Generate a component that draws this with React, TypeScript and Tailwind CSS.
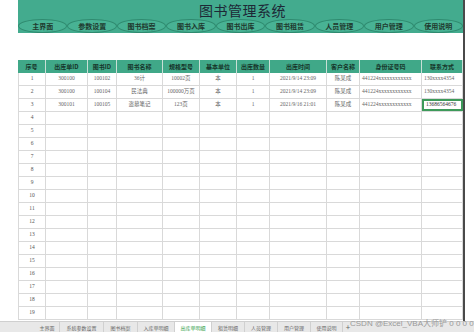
const navItems = ['主界面', '参数设置', '图书档案', '图书入库', '图书出库', '图书租赁', '人员管理', '用户管理', '使用说明'];

const headers = ['序号', '出库单ID', '图书ID', '图书名称', '规格型号', '基本单位', '出库数量', '出库时间', '客户名称', '身份证号码', '联系方式'];

const colW = ['w-[28px]', 'w-[42px]', 'w-[29px]', 'w-[46px]', 'w-[37px]', 'w-[37px]', 'w-[33px]', 'w-[57px]', 'w-[33px]', 'w-[62px]', 'w-[41px]'];

const data = [
  ['300100', '100102', '36计', '10002页', '本', '1', '2021/9/14 23:09', '陈某成', '441224xxxxxxxxxxxx', '130xxxx4354'],
  ['300100', '100104', '民法典', '100000万页', '本', '1', '2021/9/14 23:09', '陈某成', '441224xxxxxxxxxxxx', '130xxxx4354'],
  ['300101', '100105', '盗墓笔记', '123页', '本', '1', '2021/9/16 21:01', '陈某成', '441224xxxxxxxxxxxx', '13686564676'],
];

const tabs = [
  { name: '主界面', w: 'w-[25px]' },
  { name: '系统参数设置', w: 'w-[44px]' },
  { name: '图书档案', w: 'w-[34px]' },
  { name: '入库单明细', w: 'w-[37px]' },
  { name: '出库单明细', w: 'w-[37px]', active: true },
  { name: '租赁明细', w: 'w-[33px]' },
  { name: '人员管理', w: 'w-[33px]' },
  { name: '用户管理', w: 'w-[33px]' },
  { name: '使用说明', w: 'w-[32px]' },
];

export default function App() {
  const rows = Array.from({ length: 19 }, (_, i) => i);

  return (
    <div className="relative w-[474px] h-[332px] overflow-hidden bg-white flex flex-col font-['Noto_Sans_CJK_SC',sans-serif]">
      <div className="flex h-[321px]">
        <div className="w-[18px] shrink-0" />
        <div className="w-[445px] shrink-0 flex flex-col">
          {/* title banner */}
          <div className="h-[33px] bg-[#43ab8e] flex flex-col">
            <div className="h-[19px] flex items-center justify-center text-[14px] leading-none tracking-[0.5px] text-[#1d2836] pl-[4px]">
              图书管理系统
            </div>
            <div className="h-[14px] flex">
              {navItems.map((n) => (
                <div
                  key={n}
                  className="flex-1 rounded-[50%] border border-[#2f8a6f] bg-[#48b294] flex items-center justify-center text-[7px] font-bold leading-none text-[#1f3a2f]"
                >
                  {n}
                </div>
              ))}
            </div>
          </div>

          <div className="h-[27px]" />

          {/* table header */}
          <div className="flex h-[13px] bg-[#40a888]">
            {headers.map((h, i) => (
              <div
                key={h}
                className={`${colW[i]} shrink-0 flex items-center justify-center border-r border-[#c9dfd6] text-[6px] font-bold leading-none text-[#16352a]`}
              >
                {h}
              </div>
            ))}
          </div>

          {/* body */}
          {rows.map((r) => {
            const d = data[r];
            return (
              <div key={r} className="flex h-[13px] border-b border-[#d9d9d9]">
                <div className={`${colW[0]} shrink-0 border-r border-l border-[#d9d9d9] flex items-center justify-center text-[5.5px] leading-none text-[#555] font-['Liberation_Serif',serif]`}>
                  {r + 1}
                </div>
                {colW.slice(1).map((w, ci) => {
                  const sel = r === 2 && ci === 9;
                  return (
                    <div
                      key={ci}
                      className={`${w} shrink-0 flex items-center justify-center text-[5.5px] leading-none whitespace-nowrap overflow-hidden font-['Liberation_Serif','Noto_Sans_CJK_SC',serif] ${
                        sel ? 'border-2 border-[#3d9a5a] text-[#333]' : 'border-r border-[#d9d9d9] text-[#666]'
                      } ${ci === 8 || ci === 9 ? 'justify-start pl-[2px]' : ''}`}
                    >
                      {d ? d[ci] : ''}
                    </div>
                  );
                })}
              </div>
            );
          })}
        </div>
        <div className="w-[2px] shrink-0 bg-[#4a4a4a]" />
      </div>

      {/* sheet tabs */}
      <div className="h-[11px] bg-[#e8e8e8] border-t border-[#cfcfcf] flex pl-[35px]">
        {tabs.map((t) => (
          <div
            key={t.name}
            className={`${t.w} shrink-0 flex items-center justify-center text-[5px] leading-none border-r border-[#d0d0d0] ${
              t.active ? 'bg-white text-[#2e9b45]' : 'text-[#666]'
            }`}
          >
            {t.name}
          </div>
        ))}
        <div className="w-[10px] flex items-center justify-center text-[8px] leading-none text-[#666]">+</div>
      </div>

      <div className="absolute left-[350px] top-[320px] text-[8px] leading-none text-[#9a9a9a] whitespace-nowrap font-['Liberation_Sans','Noto_Sans_CJK_SC',sans-serif]">
        CSDN @Excel_VBA大师铲 0 0 0 0
      </div>
    </div>
  );
}
